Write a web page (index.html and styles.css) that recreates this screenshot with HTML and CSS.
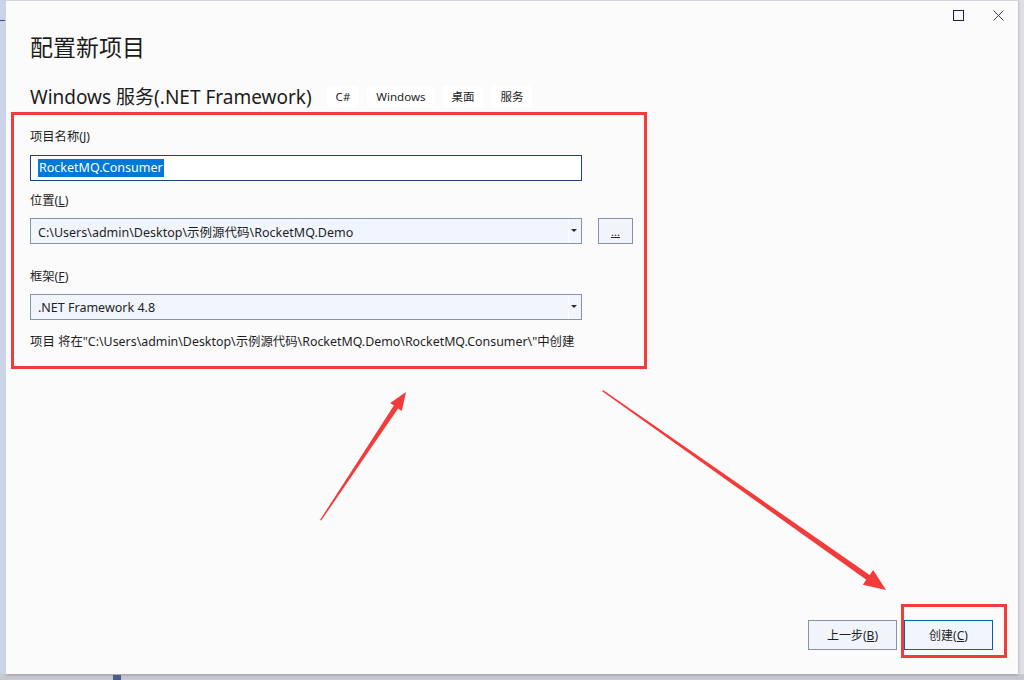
FILE: index.html
```html
<!DOCTYPE html>
<html lang="zh-CN">
<head>
<meta charset="utf-8">
<title>配置新项目</title>
<link rel="stylesheet" href="styles.css">
</head>
<body>
<div class="screen">
  <div class="left-strip"><span class="strip-line"></span></div>
  <div class="dialog">
    <div class="titlebar">
      <span class="tb-btn"><span class="max-box"></span></span>
      <span class="tb-btn">
        <svg width="11" height="11" viewBox="0 0 11 11"><path d="M0.5 0.5 L10.5 10.5 M10.5 0.5 L0.5 10.5" stroke="#3a4050" stroke-width="1" fill="none"/></svg>
      </span>
    </div>
    <h1 class="title">配置新项目</h1>
    <div class="subtitle-row">
      <span class="subtitle">Windows 服务(.NET Framework)</span>
      <span class="chip">C#</span>
      <span class="chip">Windows</span>
      <span class="chip">桌面</span>
      <span class="chip">服务</span>
    </div>
    <div class="form-box">
      <div class="label">项目名称(<u>J</u>)</div>
      <div class="input"><span class="sel">RocketMQ.Consumer</span></div>
      <div class="label label-loc">位置(<u>L</u>)</div>
      <div class="row">
        <div class="combo"><span class="combo-text">C:\Users\admin\Desktop\示例源代码\RocketMQ.Demo</span><span class="combo-arrow"></span></div>
        <div class="browse"><u>...</u></div>
      </div>
      <div class="label label-fw">框架(<u>F</u>)</div>
      <div class="combo"><span class="combo-text">.NET Framework 4.8</span><span class="combo-arrow"></span></div>
      <div class="info">项目 将在"C:\Users\admin\Desktop\示例源代码\RocketMQ.Demo\RocketMQ.Consumer\"中创建</div>
    </div>
    <div class="footer">
      <div class="btn">上一步(<u>B</u>)</div>
      <div class="btn primary">创建(<u>C</u>)</div>
    </div>
  </div>
  <span class="taskbar-bit"></span>
  <svg class="annot" width="1024" height="680" viewBox="0 0 1024 680">
    <polygon fill="#f23b3b" points="320,520 393.9,405.6 390.2,403.1 406,392 401.8,410.9 398.1,408.4 321.2,520.6"/>
    <polygon fill="#f23b3b" points="603,390 869.7,574.9 873.2,569.9 886,590 862.8,584.7 866.3,579.8 602.2,391.3"/>
    <rect x="902.5" y="605.5" width="103" height="51" fill="none" stroke="#f23b3b" stroke-width="3"/>
  </svg>
</div>
</body>
</html>
```
FILE: styles.css
```css
html, body {
  margin: 0;
  padding: 0;
}
body {
  width: 1024px;
  height: 680px;
  overflow: hidden;
  font-family: "Noto Sans", "Noto Sans CJK SC", sans-serif;
  color: #1e1e1e;
}
.screen {
  position: relative;
  width: 1024px;
  height: 680px;
  display: flex;
  background: linear-gradient(to bottom, #dfe0e6 0, #dfe0e6 674px, #c8c9d0 674px);
}
.left-strip {
  width: 6px;
  height: 674px;
  background: linear-gradient(to right, #c9d4ea 0, #c9d4ea 5px, #d3d4da 5px);
  position: relative;
  flex: none;
}
.strip-line {
  position: absolute;
  left: 0;
  top: 20px;
  width: 5px;
  height: 1px;
  background: #3b4a86;
}
.dialog {
  width: 1012px;
  height: 674px;
  background: #fbfbfc;
  box-shadow: 0 1px 3px rgba(60, 60, 80, 0.35);
  border-top: 1px solid #d4d6de;
  box-sizing: border-box;
  display: flex;
  flex-direction: column;
  flex: none;
}
.titlebar {
  height: 29px;
  display: flex;
  justify-content: flex-end;
  align-items: flex-start;
  padding-right: 14px;
  gap: 29px;
}
.tb-btn {
  width: 11px;
  height: 11px;
  margin-top: 9px;
  display: flex;
}
.max-box {
  width: 9px;
  height: 9px;
  border: 1px solid #1c2436;
}
.title {
  margin: 0 0 0 24px;
  font-size: 23px;
  font-weight: normal;
  line-height: 34px;
  height: 34px;
  color: #1b1b1b;
}
.subtitle-row {
  margin: 20px 0 0 24px;
  display: flex;
  align-items: center;
  height: 24px;
}
.subtitle {
  font-size: 19px;
  color: #1b1b1b;
  margin-right: 15px;
  white-space: nowrap;
}
.chip {
  background: #ffffff;
  border-radius: 4px;
  font-size: 11.5px;
  height: 21px;
  line-height: 21px;
  padding: 0 9px;
  margin-right: 8px;
  color: #222;
}
.form-box {
  margin: 4px 0 0 5px;
  width: 636px;
  height: 257px;
  box-sizing: border-box;
  border: 3px solid #f23b3b;
  padding: 13px 0 0 16px;
  display: flex;
  flex-direction: column;
}
.label {
  font-size: 12.3px;
  line-height: 17px;
  height: 17px;
  color: #1e1e1e;
  margin-bottom: 10px;
}
.label-loc {
  margin-bottom: 9px;
}
.label-fw {
  margin-bottom: 9px;
}
.input {
  width: 552px;
  height: 26px;
  box-sizing: border-box;
  border: 1px solid #22407a;
  background: #ffffff;
  display: flex;
  align-items: center;
  padding-left: 7px;
  margin-bottom: 11px;
}
.sel {
  background: #0078d7;
  color: #ffffff;
  font-size: 12.5px;
  line-height: 18px;
  padding: 0 1px;
}
.row {
  display: flex;
  gap: 16px;
  margin-bottom: 24px;
}
.combo {
  width: 552px;
  height: 26px;
  box-sizing: border-box;
  border: 1px solid #8791a8;
  background: #f1f5fd;
  display: flex;
  align-items: center;
  position: relative;
  flex: none;
}
.combo-text {
  font-size: 12.5px;
  padding-left: 7px;
  flex: 1;
  white-space: nowrap;
  color: #1e1e1e;
}
.combo-arrow {
  width: 12px;
  height: 24px;
  border-left: 1px solid #ffffff;
  position: relative;
}
.combo-arrow::after {
  content: "";
  position: absolute;
  left: 2px;
  top: 10px;
  border-left: 3px solid transparent;
  border-right: 3px solid transparent;
  border-top: 3px solid #2a2a2a;
}
.browse {
  width: 35px;
  height: 26px;
  box-sizing: border-box;
  border: 1px solid #8791a8;
  background: #f1f4fa;
  font-size: 11px;
  display: flex;
  align-items: center;
  justify-content: center;
  color: #222;
}
.info {
  margin-top: 13px;
  font-size: 12.4px;
  line-height: 17px;
  white-space: nowrap;
  color: #1e1e1e;
}
.footer {
  margin-top: auto;
  display: flex;
  justify-content: flex-end;
  gap: 7px;
  padding: 0 25px 24px 0;
}
.btn {
  width: 89px;
  height: 30px;
  box-sizing: border-box;
  border: 1px solid #8791a8;
  background: #f1f4fa;
  font-size: 12px;
  display: flex;
  align-items: center;
  justify-content: center;
  color: #1e1e1e;
}
.btn.primary {
  border-color: #0063b1;
  background: #f1f5fd;
}
.taskbar-bit {
  position: absolute;
  left: 113px;
  top: 675px;
  width: 8px;
  height: 5px;
  background: #4a5a8a;
}
.annot {
  position: absolute;
  left: 0;
  top: 0;
  pointer-events: none;
}
```
